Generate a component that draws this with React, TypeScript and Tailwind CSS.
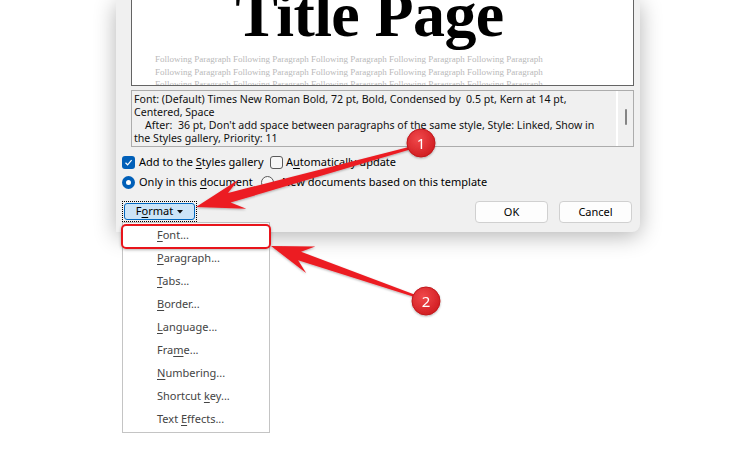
import React from "react";

const UI = { fontFamily: '"Noto Sans", "Open Sans", Arial, sans-serif' };
const SERIF = { fontFamily: '"Liberation Serif", "Times New Roman", serif' };

function arrowPoints(
  sx: number, sy: number, tx: number, ty: number,
  L: number, W: number, w0: number, w1: number
) {
  const dx = tx - sx, dy = ty - sy;
  const len = Math.hypot(dx, dy);
  const ux = dx / len, uy = dy / len;
  const nx = -uy, ny = ux;
  const neck = L * 0.72;
  const Nx = tx - ux * neck, Ny = ty - uy * neck;
  const Bx = tx - ux * L, By = ty - uy * L;
  const pts = [
    [sx + nx * w0, sy + ny * w0],
    [Nx + nx * w1, Ny + ny * w1],
    [Bx + nx * W, By + ny * W],
    [tx, ty],
    [Bx - nx * W, By - ny * W],
    [Nx - nx * w1, Ny - ny * w1],
    [sx - nx * w0, sy - ny * w0],
  ];
  return pts.map((p) => p.map((v) => v.toFixed(1)).join(",")).join(" ");
}

function U({ children }: { children: React.ReactNode }) {
  return <span className="underline underline-offset-[2px]">{children}</span>;
}

const follow = "Following Paragraph Following Paragraph Following Paragraph Following Paragraph Following Paragraph";

const menu: React.ReactNode[] = [
  <><U>F</U>ont...</>,
  <><U>P</U>aragraph...</>,
  <><U>T</U>abs...</>,
  <><U>B</U>order...</>,
  <><U>L</U>anguage...</>,
  <>Fra<U>m</U>e...</>,
  <><U>N</U>umbering...</>,
  <>Shortcut <U>k</U>ey...</>,
  <>Text <U>E</U>ffects...</>,
];

export default function App() {
  return (
    <div className="relative w-[750px] h-[461px] bg-white overflow-hidden text-black" style={UI}>
      {/* Dialog */}
      <div className="ml-[116px] w-[524px] h-[232px] bg-[#f0f0f0] rounded-br-[8px] shadow-[0_4px_22px_rgba(0,0,0,0.30)] flex flex-col">
        {/* Preview */}
        <div className="ml-[15px] w-[503px] h-[86px] bg-white border-x border-b border-[#646464] overflow-hidden flex flex-col">
          <div
            className="h-[62px] -mt-[16px] leading-[62px] text-[64px] font-bold text-center pr-[26px] whitespace-nowrap tracking-[-0.6px]"
            style={SERIF}
          >
            Title Page
          </div>
          <div className="mt-[7px] pl-[23px] text-[9px] leading-[12.5px] text-[#b9b9b9] whitespace-nowrap" style={SERIF}>
            <div>{follow}</div>
            <div>{follow}</div>
            <div>{follow}</div>
          </div>
        </div>

        {/* Description */}
        <div className="mt-[4px] ml-[15px] w-[503px] h-[57px] border border-[#acacac] flex">
          <div className="flex-1 pl-[2px] pt-[2px] text-[10.6px] leading-[13px] whitespace-pre text-[#111]">
            <div>Font: (Default) Times New Roman Bold, 72 pt, Bold, Condensed by  0.5 pt, Kern at 14 pt,</div>
            <div>Centered, Space</div>
            <div>    After:  36 pt, Don't add space between paragraphs of the same style, Style: Linked, Show in</div>
            <div>the Styles gallery, Priority: 11</div>
          </div>
          <div className="w-[17px] border-l-2 border-white flex justify-center">
            <div className="mt-[18px] w-[2px] h-[16px] bg-[#858585] rounded-full" />
          </div>
        </div>

        {/* Checkbox row */}
        <div className="mt-[8px] ml-[6px] h-[14px] flex items-center text-[11px] whitespace-nowrap">
          <div className="w-[148px] shrink-0 flex items-center">
            <div className="w-[13px] h-[13px] shrink-0 rounded-[3px] bg-[#005fb8] flex items-center justify-center">
              <svg width="9" height="9" viewBox="0 0 9 9">
                <path d="M1.5 4.8 L3.6 6.8 L7.6 2.2" fill="none" stroke="white" strokeWidth="1.2" />
              </svg>
            </div>
            <span className="ml-[4px]">Add to the <U>S</U>tyles gallery</span>
          </div>
          <div className="flex items-center">
            <div className="w-[13px] h-[13px] shrink-0 rounded-[3px] border border-[#5a5a5a] bg-[#f7f7f7]" />
            <span className="ml-[3px]">A<U>u</U>tomatically update</span>
          </div>
        </div>

        {/* Radio row */}
        <div className="mt-[6px] ml-[6px] h-[14px] flex items-center text-[11px] whitespace-nowrap">
          <div className="w-[139px] shrink-0 flex items-center">
            <div className="w-[13px] h-[13px] shrink-0 rounded-full bg-[#005fb8] flex items-center justify-center">
              <div className="w-[5px] h-[5px] rounded-full bg-white" />
            </div>
            <span className="ml-[4px]">Only in this <U>d</U>ocument</span>
          </div>
          <div className="flex items-center">
            <div className="w-[13px] h-[13px] shrink-0 rounded-full border border-[#5a5a5a] bg-[#f7f7f7]" />
            <span className="ml-[8px]">New documents based on this template</span>
          </div>
        </div>

        {/* Buttons row */}
        <div className="mt-[12px] ml-[6px] flex items-start">
          <div className="w-[75px] h-[21px] border border-dotted border-black p-[1px]">
            <div className="w-full h-full rounded-[3px] border border-[#0067c0] bg-[#cce4f7] flex items-center justify-center text-[11px]">
              <span>F<U>o</U>rmat</span>
              <svg className="ml-[4px]" width="6" height="4" viewBox="0 0 6 4">
                <path d="M0 0 L6 0 L3 3.5 Z" fill="#111" />
              </svg>
            </div>
          </div>
          <div className="ml-auto mr-[8px] flex gap-[11px]">
            <div className="w-[73px] h-[22px] rounded-[4px] border border-[#d0d0d0] bg-[#fdfdfd] flex items-center justify-center text-[11px]">OK</div>
            <div className="w-[73px] h-[22px] rounded-[4px] border border-[#d0d0d0] bg-[#fdfdfd] flex items-center justify-center text-[11px]">Cancel</div>
          </div>
        </div>
      </div>

      {/* Dropdown menu */}
      <div className="absolute left-[122px] top-[222px] w-[148px] h-[211px] bg-white border border-[#c4c4c4] pt-[1px]">
        {menu.map((m, i) => (
          <div key={i} className="h-[23px] flex items-center pl-[34px] text-[11px] text-[#444]">
            <span>{m}</span>
          </div>
        ))}
      </div>

      {/* Highlight around Font */}
      <div className="absolute left-[121px] top-[224px] w-[150px] h-[25px] rounded-[5px] border-2 border-[#e8141b] shadow-[0_1px_3px_rgba(0,0,0,0.3)]" />

      {/* Arrows and badges */}
      <svg className="absolute left-0 top-0 pointer-events-none" width="750" height="461" viewBox="0 0 750 461">
        <defs>
          <radialGradient id="bg" cx="40%" cy="35%" r="70%">
            <stop offset="0%" stopColor="#f0484b" />
            <stop offset="100%" stopColor="#d01c20" />
          </radialGradient>
          <filter id="sh" x="-20%" y="-20%" width="140%" height="140%">
            <feDropShadow dx="0" dy="1" stdDeviation="1" floodColor="#000" floodOpacity="0.3" />
          </filter>
        </defs>
        <polygon points={arrowPoints(414, 147, 196, 207, 48, 15, 1.2, 5)} fill="#ec1c24" filter="url(#sh)" />
        <polygon points={arrowPoints(418, 297, 271, 246, 42, 14, 1.2, 4.5)} fill="#ec1c24" filter="url(#sh)" />
        <g filter="url(#sh)">
          <circle cx="421" cy="143" r="14" fill="url(#bg)" stroke="#c0161a" strokeWidth="1" />
          <text x="421" y="148.5" textAnchor="middle" fontSize="15" fill="white" style={UI}>1</text>
          <circle cx="426" cy="301" r="14" fill="url(#bg)" stroke="#c0161a" strokeWidth="1" />
          <text x="426" y="306.5" textAnchor="middle" fontSize="15" fill="white" style={UI}>2</text>
        </g>
      </svg>
    </div>
  );
}
